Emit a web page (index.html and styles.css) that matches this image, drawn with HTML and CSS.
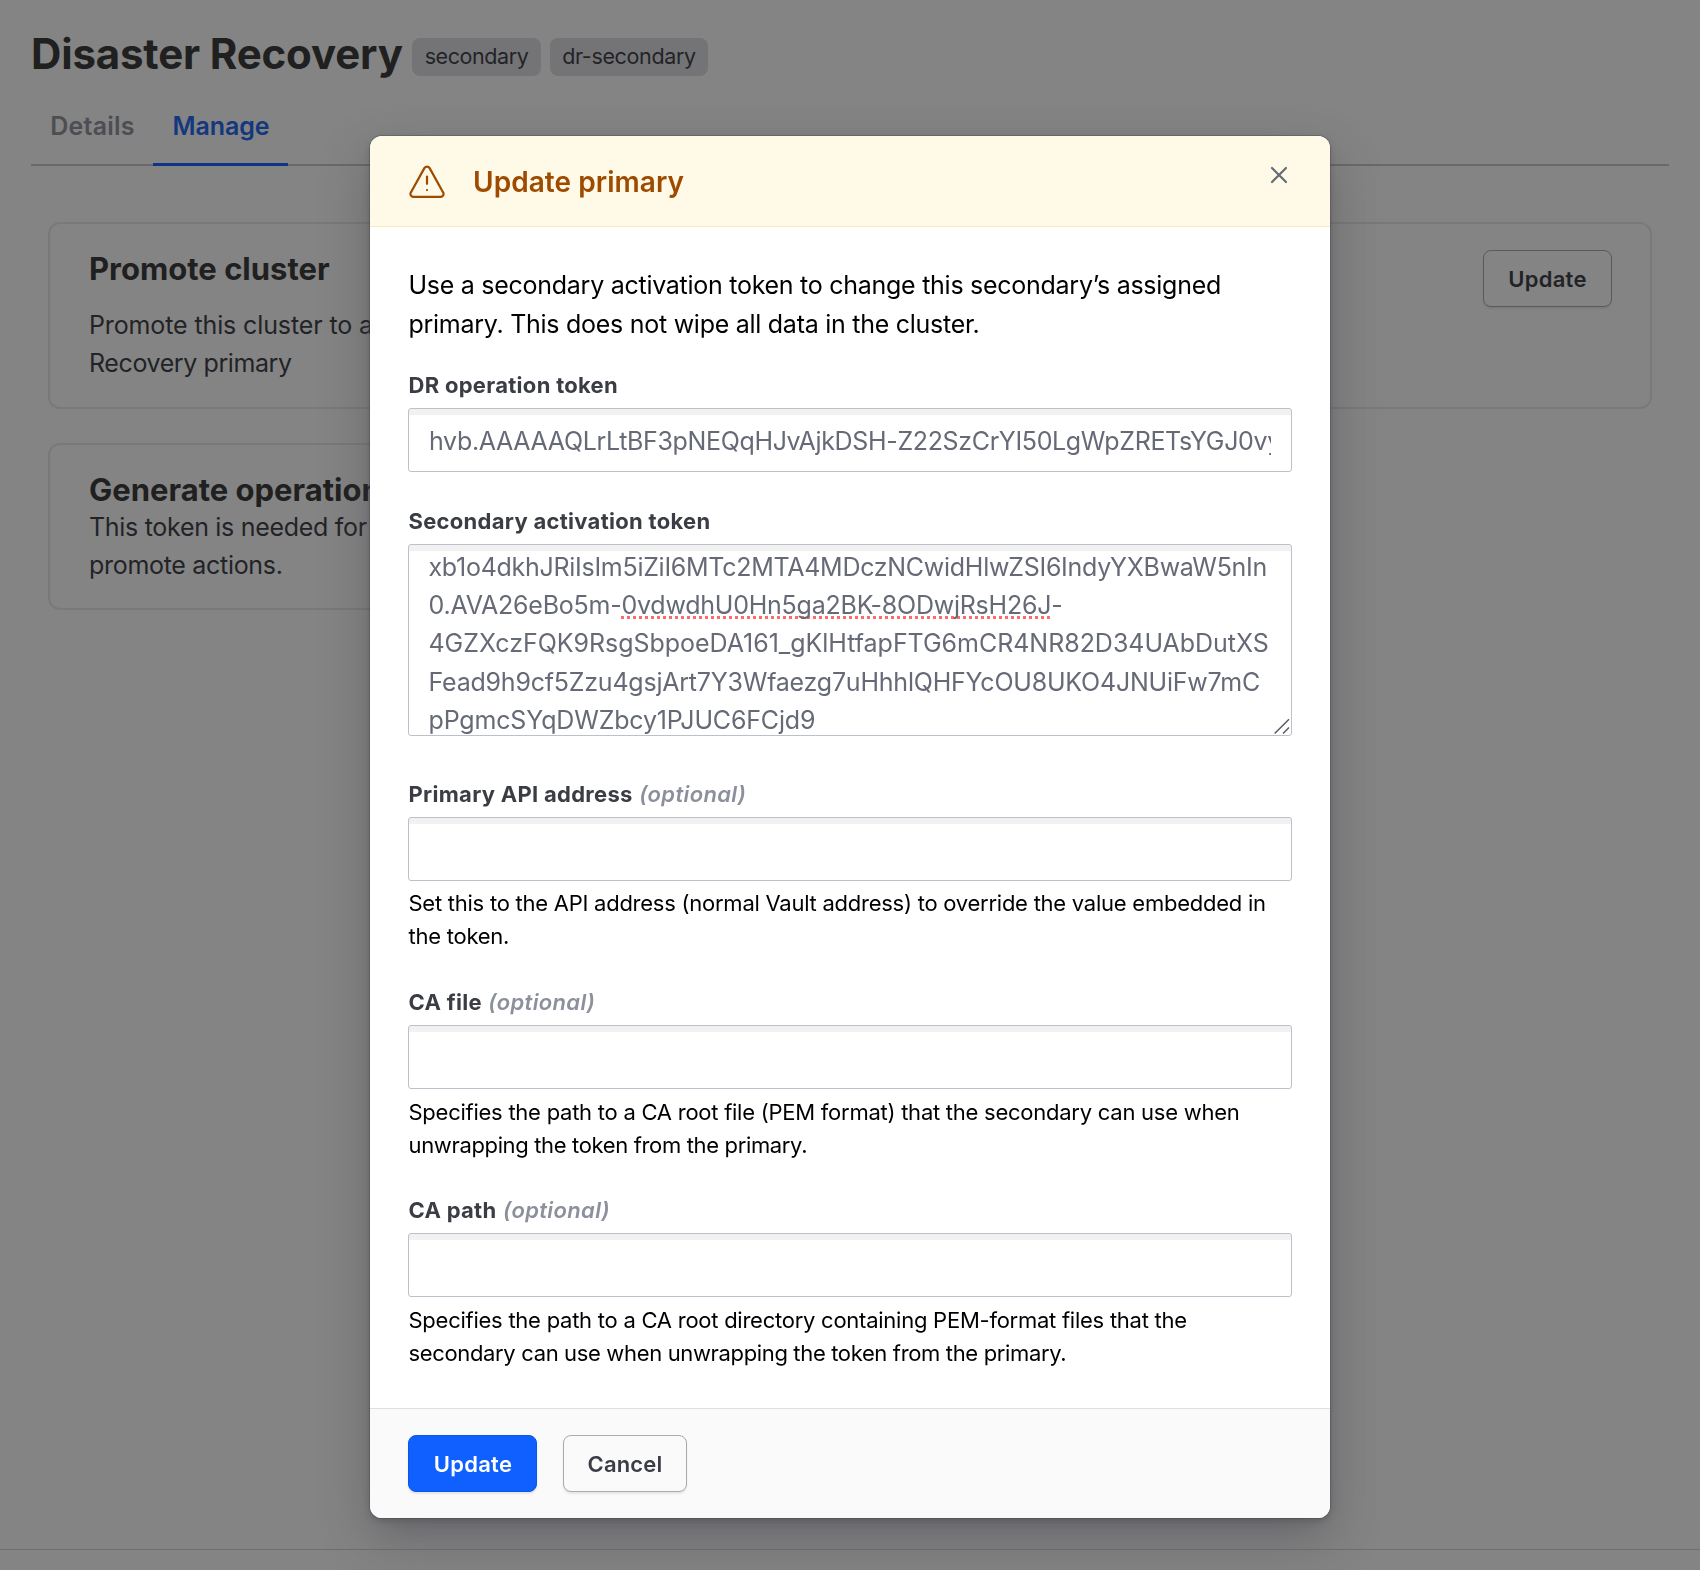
FILE: index.html
```html
<!DOCTYPE html>
<html lang="en">
<head>
<meta charset="utf-8">
<title>Disaster Recovery</title>
<link rel="stylesheet" href="styles.css">
</head>
<body>
<main class="page">
  <header class="page-header">
    <h1 class="page-title">Disaster Recovery</h1>
    <span class="badge badge-mode">secondary</span>
    <span class="badge badge-id">dr-secondary</span>
  </header>
  <nav class="tabs">
    <a class="tab tab-details">Details</a>
    <a class="tab tab-manage is-active">Manage</a>
  </nav>
  <div class="cards">
    <div class="cards-column">
      <section class="card card-promote">
        <h2 class="card-title">Promote cluster</h2>
        <p class="card-text"><span class="promote-line">Promote this cluster to a</span><br><span class="recovery-line">Recovery primary</span></p>
      </section>
      <section class="card card-generate">
        <h2 class="card-title">Generate operation</h2>
        <p class="card-text">This token is needed for<br>promote actions.</p>
      </section>
    </div>
    <div class="cards-column">
      <section class="card card-update">
        <button class="button button-secondary">Update</button>
      </section>
    </div>
  </div>
  <footer class="page-footer"></footer>
</main>

<div class="overlay">
  <div class="modal" role="dialog" aria-label="Update primary">
    <header class="modal-header">
      <svg class="icon-warning" viewBox="0 0 36 34" width="36" height="34" fill="none" stroke="currentColor" stroke-width="2.2" stroke-linecap="round" stroke-linejoin="round">
        <path d="M15.5 2.9a3 3 0 0 1 5 0L34 27.2a3 3 0 0 1-2.6 4.7H4.6A3 3 0 0 1 2 27.2z"/>
        <path d="M18 11.5v7.3M18 25v.1"/>
      </svg>
      <h2 class="modal-title">Update primary</h2>
      <button class="modal-close" aria-label="Close">
        <svg viewBox="0 0 18 18" width="18" height="18" fill="none" stroke="currentColor" stroke-width="2.2" stroke-linecap="round"><path d="M2 2l14 14M16 2L2 16"/></svg>
      </button>
    </header>
    <div class="modal-body">
      <p class="intro">Use a secondary activation token to change this secondary’s assigned<br>primary. This does not wipe all data in the cluster.</p>
      <div class="field">
        <label class="label">DR operation token</label>
        <input class="input" type="text" value="hvb.AAAAAQLrLtBF3pNEQqHJvAjkDSH-Z22SzCrYI50LgWpZRETsYGJ0vy">
      </div>
      <div class="field field-token">
        <label class="label">Secondary activation token</label>
        <div class="textarea">
          <div class="token-line-1">xb1o4dkhJRiIsIm5iZiI6MTc2MTA4MDczNCwidHlwZSI6IndyYXBwaW5nIn</div>
          <div class="token-line-2">0.AVA26eBo5m-<span class="misspelled">0vdwdhU0Hn5ga2BK-8ODwjRsH26J</span>-</div>
          <div class="token-line-3">4GZXczFQK9RsgSbpoeDA161_gKlHtfapFTG6mCR4NR82D34UAbDutXS</div>
          <div class="token-line-4">Fead9h9cf5Zzu4gsjArt7Y3Wfaezg7uHhhlQHFYcOU8UKO4JNUiFw7mC</div>
          <div class="token-line-5">pPgmcSYqDWZbcy1PJUC6FCjd9</div>
          <svg class="resize-grip" viewBox="0 0 16 16" width="16" height="16" stroke="#5c5c5c" stroke-width="1.5"><path d="M.7 15.5L15 1.2M9 15.5l6-6"/></svg>
        </div>
      </div>
      <div class="field">
        <label class="label">Primary API address <em class="optional">(optional)</em></label>
        <input class="input" type="text">
        <p class="help">Set this to the API address (normal Vault address) to override the value embedded in<br>the token.</p>
      </div>
      <div class="field">
        <label class="label">CA file <em class="optional">(optional)</em></label>
        <input class="input" type="text">
        <p class="help help-lower">Specifies the path to a CA root file (PEM format) that the secondary can use when<br><span class="help-tight">unwrapping the token from the primary.</span></p>
      </div>
      <div class="field">
        <label class="label">CA path <em class="optional">(optional)</em></label>
        <input class="input" type="text">
        <p class="help help-lower">Specifies the path to a CA root directory containing PEM-format files that the<br><span class="help-tight">secondary can use when unwrapping the token from the primary.</span></p>
      </div>
    </div>
    <footer class="modal-footer">
      <button class="button button-primary">Update</button>
      <button class="button button-cancel">Cancel</button>
    </footer>
  </div>
</div>
</body>
</html>
```
FILE: styles.css
```css
*, *::before, *::after { box-sizing: border-box; }

body {
  margin: 0;
  background: #fff;
  color: #000;
  font: 400 25px/38px Inter, "Liberation Sans", sans-serif;
}

h1, h2, p { margin: 0; }

.page {
  display: flex;
  flex-direction: column;
  height: 1570px;
  padding-top: 28px;
  overflow: hidden;
}

.page-header {
  display: flex;
  align-items: center;
  height: 52px;
  padding-left: 31px;
}

.page-title {
  width: 381px;
  color: #363636;
  font-size: 42px;
  font-weight: 700;
  line-height: 52px;
  letter-spacing: -0.16px;
  white-space: nowrap;
}

.badge {
  height: 38px;
  margin: 6px 9px 0 0;
  border-radius: 8px;
  background: #dedfe3;
  color: #3b3d45;
  font-size: 21.5px;
  line-height: 37px;
  text-align: center;
}
.badge-mode { width: 129px; letter-spacing: -0.42px; }
.badge-id { width: 158px; letter-spacing: -0.34px; }

.tabs {
  display: flex;
  height: 86px;
  margin: 0 31px;
  box-shadow: inset 0 -2px #c8c9cd;
}

.tab {
  padding: 26px 0 0 1px;
  color: #8e929c;
  font-weight: 600;
  line-height: 40px;
  text-align: center;
}
.tab-details { width: 122px; letter-spacing: 0.2px; }
.tab-manage { width: 135px; letter-spacing: -0.1px; }
.tab.is-active { border-bottom: 3px solid #1563ff; color: #1c66f2; }

.cards {
  display: grid;
  grid-template-columns: 1fr 1fr;
  gap: 34px;
  margin: 56px 48px 0;
}
.cards-column { display: flex; flex-direction: column; gap: 34px; }

.card {
  padding: 25px 39px;
  border: 2px solid #e9e9ea;
  border-radius: 12px;
}
.card-promote, .card-update { height: 187px; }
.card-generate { height: 167px; }
.card-update { display: flex; justify-content: flex-end; align-items: flex-start; padding: 26px 38px; }

.card-title {
  color: #363636;
  font-size: 31px;
  font-weight: 700;
  line-height: 40px;
}
.card-text { color: #3b3d45; letter-spacing: -0.3px; }
.card-promote .card-text { padding-top: 17px; }
.card-generate .card-text { margin-top: -2px; }
.promote-line { letter-spacing: -0.12px; }
.recovery-line { letter-spacing: -0.4px; }

.page-footer { margin-top: auto; height: 21px; border-top: 1px solid #d6d6d8; }

.button {
  height: 57px;
  padding: 1px 0 0;
  border: 1px solid #aaa;
  border-radius: 8px;
  background: #fafafa;
  box-shadow: 0 2px 2px rgba(59, 61, 69, 0.1);
  color: #3b3d45;
  font: 600 22px/1 Inter, "Liberation Sans", sans-serif;
  letter-spacing: 0.25px;
}
.button-secondary { width: 129px; background: #fff; }
.button-primary { width: 129px; padding-left: 1px; border-color: #0c56e9; background: #1060ff; color: #fff; }
.button-cancel { width: 124px; letter-spacing: 0.18px; }

.overlay {
  position: fixed;
  inset: 0;
  display: flex;
  justify-content: center;
  align-items: flex-start;
  padding-top: 136px;
  background: rgba(10, 10, 10, 0.5);
}

.modal {
  width: 960px;
  overflow: hidden;
  border-radius: 12px;
  background: #fff;
  box-shadow: 0 0 0 1px rgba(59, 61, 69, 0.3), 0 3px 6px rgba(59, 61, 69, 0.35), 0 20px 48px rgba(59, 61, 69, 0.4);
}

.modal-header {
  display: flex;
  align-items: center;
  height: 91px;
  padding: 1px 38px 0 39px;
  border-bottom: 1px solid #fbeabf;
  background: #fff9e8;
  color: #9e4b00;
}
.modal-title {
  flex: 1;
  padding-left: 28px;
  font-size: 28px;
  font-weight: 600;
  line-height: 40px;
  letter-spacing: 0.05px;
}
.modal-close {
  display: flex;
  align-self: flex-start;
  margin-top: 29px;
  padding: 0 4px;
  border: 0;
  background: none;
  color: #656a76;
}

.modal-body { padding: 39px 38px 40px; }

.intro {
  padding: 0 0 25px 0.5px;
  font-size: 25px;
  line-height: 38.5px;
  letter-spacing: -0.27px;
  white-space: nowrap;
}

.field { display: flex; flex-direction: column; margin-bottom: 32px; }
.field:last-child { margin-bottom: 0; }
.field-token { margin-bottom: 41px; }
.field:nth-last-child(-n+3):not(:last-child) { margin-bottom: 33px; }

.label {
  height: 40px;
  padding: 1px 0 0 0.5px;
  color: #3b3d45;
  font-size: 22px;
  font-weight: 700;
  line-height: 33px;
  letter-spacing: 0.29px;
}
.optional { margin-left: 1px; color: #8c909c; font-weight: 600; letter-spacing: 0.35px; }

.input, .textarea {
  width: 884px;
  border: 1px solid #bdc0ca;
  border-radius: 3px;
  background: #fff;
  box-shadow: inset 0 7px 1px -1px #f1f1f1;
  color: #656a76;
  font: 400 25px/38.2px Inter, "Liberation Sans", sans-serif;
}
.input {
  height: 64px;
  padding: 2px 20px 0;
  letter-spacing: -0.34px;
}
.textarea {
  position: relative;
  height: 192px;
  padding: 3px 19px 0 19.5px;
  overflow: hidden;
  white-space: nowrap;
}
.token-line-1 { letter-spacing: -0.28px; }
.token-line-2 { letter-spacing: -0.23px; }
.token-line-3 { letter-spacing: -0.03px; }
.token-line-4 { letter-spacing: -0.22px; }
.token-line-5 { letter-spacing: -0.16px; }
.misspelled {
  background: repeating-linear-gradient(90deg, #ff6b68 0 3px, transparent 3px 6px) left bottom 1px / 100% 3px no-repeat;
}
.resize-grip { position: absolute; right: 1px; bottom: 1px; }

.help {
  padding: 6px 0 0 0.5px;
  font-size: 22px;
  line-height: 32.5px;
  letter-spacing: -0.25px;
  white-space: nowrap;
}
.help-lower { padding-top: 7px; margin-bottom: -1px; }
.help-tight { letter-spacing: -0.35px; }

.modal-footer {
  display: flex;
  gap: 26px;
  height: 110px;
  padding: 26px 38px;
  border-top: 1px solid #dedfe3;
  background: #fafafa;
}
```
